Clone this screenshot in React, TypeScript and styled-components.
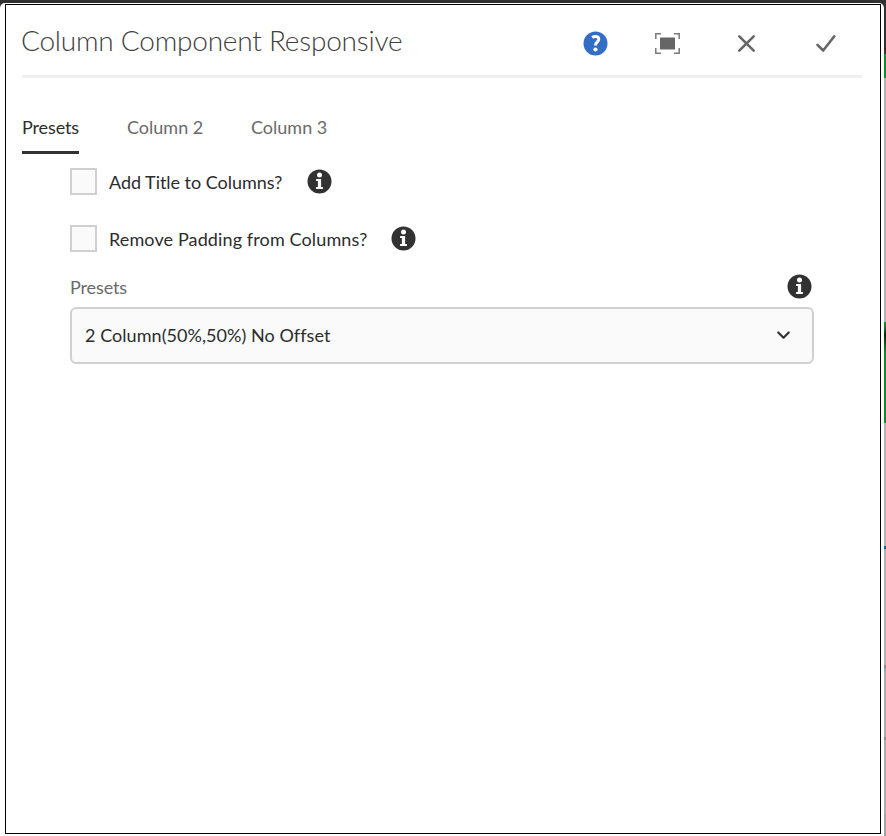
import React from "react";
import styled, { createGlobalStyle } from "styled-components";

const GlobalStyle = createGlobalStyle`
  * { box-sizing: border-box; }
  body { margin: 0; overflow: hidden; font-family: Lato, "Noto Sans", sans-serif; font-size: 18px; color: #2c2c2c; }
`;

const Backdrop = styled.div`
  width: 886px;
  height: 836px;
  padding: 3px 2px 0 0;
  background: linear-gradient(
    to bottom,
    #323232 0 54px,
    #168a2c 54px 78px,
    #b1b1b1 78px 322px,
    #168a2c 322px 325px,
    #08260d 335px,
    #168a2c 353px 423px,
    #b4b4b4 423px 546px,
    #1d5c9e 546px 549px,
    #b1b1b1 549px 665px,
    #8a8a8a 665px 668px,
    #94a3b5 668px 671px,
    #acacac 671px 737px,
    #8a8a8a 737px 740px,
    #acacac 740px 814px,
    #a3a3a3 814px
  );
`;

const Dialog = styled.main`
  height: 833px;
  padding: 1px 3px 2px 5px;
  background: #fff;
  border-radius: 5px 5px 0 0;
`;

const Frame = styled.div`
  height: 830px;
  border: 1px solid #000;
  padding: 0 18px 0 16px;
`;

const Header = styled.header`
  display: flex;
  align-items: center;
  height: 73px;
  border-bottom: 3px solid #f0f0f0;
`;

const Title = styled.h1`
  flex: 1;
  margin: 0 0 0 -1px;
  font-size: 28px;
  font-weight: 300;
  line-height: 34px;
  letter-spacing: -0.22px;
  white-space: nowrap;
  color: #404040;
`;

const Actions = styled.div`
  display: flex;
  align-items: center;
  padding: 7px 26px 0 0;
`;

const IconButton = styled.button<{ $before?: number }>`
  display: flex;
  margin: 0 0 0 ${(p) => p.$before ?? 0}px;
  padding: 0;
  border: 0;
  background: none;
`;

const TabList = styled.nav`
  display: flex;
  gap: 48px;
  height: 76px;
  padding-top: 37px;
`;

const Tab = styled.a<{ $active?: boolean; $width: number }>`
  width: ${(p) => p.$width}px;
  height: 39px;
  line-height: 24px;
  white-space: nowrap;
  letter-spacing: ${(p) => (p.$active ? -0.12 : 0)}px;
  color: ${(p) => (p.$active ? "#2c2c2c" : "#6a6a6a")};
  border-bottom: 3px solid ${(p) => (p.$active ? "#323232" : "transparent")};
`;

const Form = styled.form`
  display: flex;
  flex-direction: column;
  width: 744px;
  margin: 14px 0 0 48px;
`;

const CheckRow = styled.label`
  display: flex;
  align-items: center;
  height: 27px;
  margin-bottom: 30px;
`;

const CheckBox = styled.span`
  width: 27px;
  height: 27px;
  margin-right: 12px;
  border: 2px solid #d0d0d0;
  background: #fafafa;
`;

const CheckText = styled.span<{ $width: number; $spacing: number }>`
  width: ${(p) => p.$width}px;
  margin-right: 24px;
  padding-top: 1px;
  line-height: 24px;
  white-space: nowrap;
  letter-spacing: ${(p) => p.$spacing}px;
`;

const FieldHead = styled.div`
  display: flex;
  align-items: center;
  justify-content: space-between;
  height: 25px;
  margin: -8px 2px 8px 0;
`;

const FieldLabel = styled.span`
  padding-top: 1px;
  line-height: 22px;
  letter-spacing: -0.12px;
  color: #6a6a6a;
`;

const Select = styled.div`
  display: flex;
  align-items: center;
  justify-content: space-between;
  height: 57px;
  padding: 0 22px 1px 13px;
  border: 2px solid #d0d0d0;
  border-radius: 6px;
  background: #fafafa;
`;

const SelectValue = styled.span`
  letter-spacing: 0.05px;
`;

const Icon = styled.svg`
  display: block;
  flex: none;
`;

const InfoIcon = () => (
  <Icon width="25" height="25" viewBox="-.5 -.5 25 25">
    <circle cx="12" cy="12" r="12" fill="#323232" />
    <circle cx="12" cy="5.6" r="2.5" fill="#fff" />
    <path d="M8.6 9.4h5v8h1.8v2.2H8.6v-2.2h1.8v-5.8H8.6z" fill="#fff" />
  </Icon>
);

const HelpIcon = () => (
  <Icon width="25" height="25" viewBox="-.5 -.5 25 25">
    <circle cx="12" cy="12" r="12" fill="#326ec8" />
    <path d="M8.7 5.9C9.9 5.1 11 4.9 12 4.9c2.1 0 3.3 1.1 3.3 2.9 0 2.6-3.3 2.8-3.3 6.1" fill="none" stroke="#fff" strokeWidth="3" />
    <circle cx="12" cy="18" r="2.1" fill="#fff" />
  </Icon>
);

const FullScreenIcon = () => (
  <Icon width="25" height="21" viewBox="0 0 25 21">
    <path d="M.8 6V.8H6M19 .8h5.2V6M24.2 15v5.2H19M6 20.2H.8V15" fill="none" stroke="#7a7a7a" strokeWidth="1.5" />
    <path d="M5 4.5h15v12H5z" fill="#666" />
  </Icon>
);

const CloseIcon = () => (
  <Icon width="19" height="19" viewBox="-.5 -.5 19 19">
    <path d="M1.8 1.8l14.4 14.4M16.2 1.8L1.8 16.2" stroke="#666" strokeWidth="2.6" strokeLinecap="round" />
  </Icon>
);

const CheckIcon = () => (
  <Icon width="20" height="19" viewBox="0 -.5 20 19">
    <path d="M1.5 10.3l5.7 5.7L18.3 1.8" fill="none" stroke="#666" strokeWidth="2.6" strokeLinecap="round" strokeLinejoin="round" />
  </Icon>
);

const ChevronIcon = () => (
  <Icon width="13" height="9" viewBox="0 0 13 9">
    <path d="M1.3 1.5l5.2 5.2 5.2-5.2" fill="none" stroke="#323232" strokeWidth="2.2" strokeLinecap="round" strokeLinejoin="round" />
  </Icon>
);

export default function App() {
  return (
    <>
      <GlobalStyle />
      <Backdrop>
        <Dialog>
          <Frame>
            <Header>
              <Title>Column Component Responsive</Title>
              <Actions>
                <IconButton aria-label="Help"><HelpIcon /></IconButton>
                <IconButton $before={47} aria-label="Toggle fullscreen"><FullScreenIcon /></IconButton>
                <IconButton $before={57} aria-label="Cancel"><CloseIcon /></IconButton>
                <IconButton $before={60} aria-label="Done"><CheckIcon /></IconButton>
              </Actions>
            </Header>
            <TabList>
              <Tab $active $width={57}>Presets</Tab>
              <Tab $width={76}>Column 2</Tab>
              <Tab $width={77}>Column 3</Tab>
            </TabList>
            <Form>
              <CheckRow>
                <CheckBox />
                <CheckText $width={174} $spacing={-0.03}>Add Title to Columns?</CheckText>
                <InfoIcon />
              </CheckRow>
              <CheckRow>
                <CheckBox />
                <CheckText $width={258} $spacing={0.12}>Remove Padding from Columns?</CheckText>
                <InfoIcon />
              </CheckRow>
              <FieldHead>
                <FieldLabel>Presets</FieldLabel>
                <InfoIcon />
              </FieldHead>
              <Select>
                <SelectValue>2 Column(50%,50%) No Offset</SelectValue>
                <ChevronIcon />
              </Select>
            </Form>
          </Frame>
        </Dialog>
      </Backdrop>
    </>
  );
}
